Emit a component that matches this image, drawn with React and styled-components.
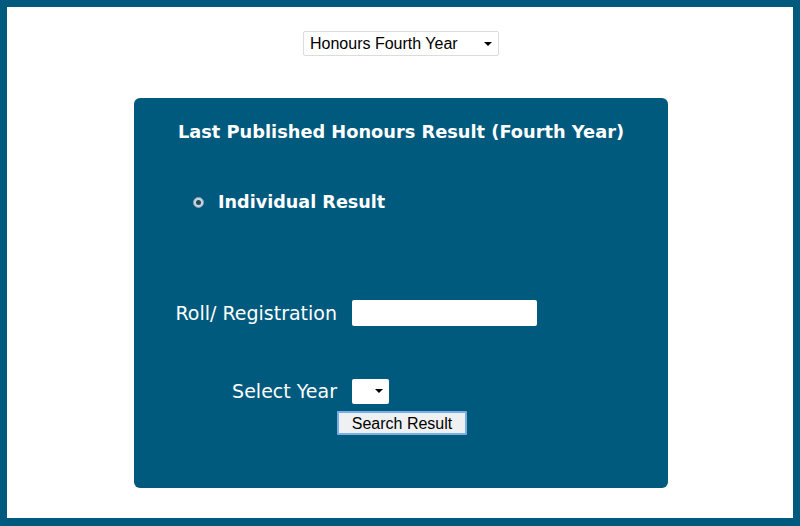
import React from 'react';
import styled, { createGlobalStyle } from 'styled-components';

const GlobalStyle = createGlobalStyle`
  html, body {
    margin: 0;
    padding: 0;
    background: #ffffff;
  }
  * {
    box-sizing: border-box;
  }
`;

const arrow = `url("data:image/svg+xml;utf8,<svg xmlns='http://www.w3.org/2000/svg' width='8' height='4'><path d='M0 0h8L4 4z' fill='black'/></svg>")`;

const Page = styled.div`
  width: 800px;
  height: 526px;
  border: 7px solid #005a7d;
  border-bottom-width: 8px;
  background: #ffffff;
  display: flex;
  flex-direction: column;
  align-items: center;
  padding-top: 24px;
`;

const TopSelect = styled.select`
  width: 196px;
  height: 25px;
  margin-left: 2px;
  font-family: "Liberation Sans", Arial, sans-serif;
  font-size: 16px;
  color: #000;
  border: 1px solid #dcdcdc;
  border-radius: 2px;
  padding: 0 4px 0 6px;
  appearance: none;
  background: #fff ${arrow} no-repeat right 6px center;
`;

const Panel = styled.div`
  margin-top: 42px;
  margin-left: 2px;
  width: 534px;
  height: 390px;
  background: #005a7d;
  border-radius: 6px;
  color: #ffffff;
  font-family: "DejaVu Sans", Verdana, sans-serif;
  padding-top: 21px;
  display: flex;
  flex-direction: column;
`;

const Title = styled.h2`
  margin: 0;
  text-align: center;
  font-size: 17.8px;
  font-weight: bold;
  line-height: 26px;
`;

const RadioRow = styled.label`
  display: flex;
  align-items: center;
  margin: 44px 0 0 59px;
  font-size: 17.6px;
  font-weight: bold;
  line-height: 26px;
  gap: 14px;
`;

const RadioDot = styled.span`
  width: 11px;
  height: 11px;
  border-radius: 50%;
  background: #c9d6de;
  border: 1px solid #8aa2b0;
  display: flex;
  align-items: center;
  justify-content: center;
  &::after {
    content: '';
    width: 5px;
    height: 5px;
    border-radius: 50%;
    background: #1f4a63;
  }
`;

const FormGrid = styled.div`
  display: grid;
  grid-template-columns: 203px 1fr;
  column-gap: 15px;
  align-items: center;
  margin-top: ${p => p.$top}px;
`;

const Label = styled.span`
  text-align: right;
  font-size: 19px;
  line-height: 26px;
`;

const TextInput = styled.input`
  width: 185px;
  height: 26px;
  border: none;
  border-radius: 2px;
  background: #fff;
  padding: 0 4px;
`;

const YearSelect = styled.select`
  width: 37px;
  height: 25px;
  border: none;
  border-radius: 2px;
  appearance: none;
  background: #fff ${arrow} no-repeat right 6px center;
`;

const SearchButton = styled.button`
  align-self: center;
  margin-top: 7px;
  margin-left: 2px;
  width: 130px;
  height: 24px;
  font-family: "Liberation Sans", Arial, sans-serif;
  font-size: 16px;
  line-height: 18px;
  color: #000;
  background: #eef0f2;
  border: 2px solid #7aaee6;
  border-radius: 1px;
  padding: 2px 0 0;
`;

export default function App() {
  return (
    <>
      <GlobalStyle />
      <Page>
        <TopSelect defaultValue="4">
          <option value="4">Honours Fourth Year</option>
        </TopSelect>
        <Panel>
          <Title>Last Published Honours Result (Fourth Year)</Title>
          <RadioRow>
            <RadioDot />
            Individual Result
          </RadioRow>
          <FormGrid $top={85}>
            <Label>Roll/ Registration</Label>
            <TextInput type="text" />
          </FormGrid>
          <FormGrid $top={52}>
            <Label>Select Year</Label>
            <YearSelect>
              <option value=""></option>
            </YearSelect>
          </FormGrid>
          <SearchButton>Search Result</SearchButton>
        </Panel>
      </Page>
    </>
  );
}
